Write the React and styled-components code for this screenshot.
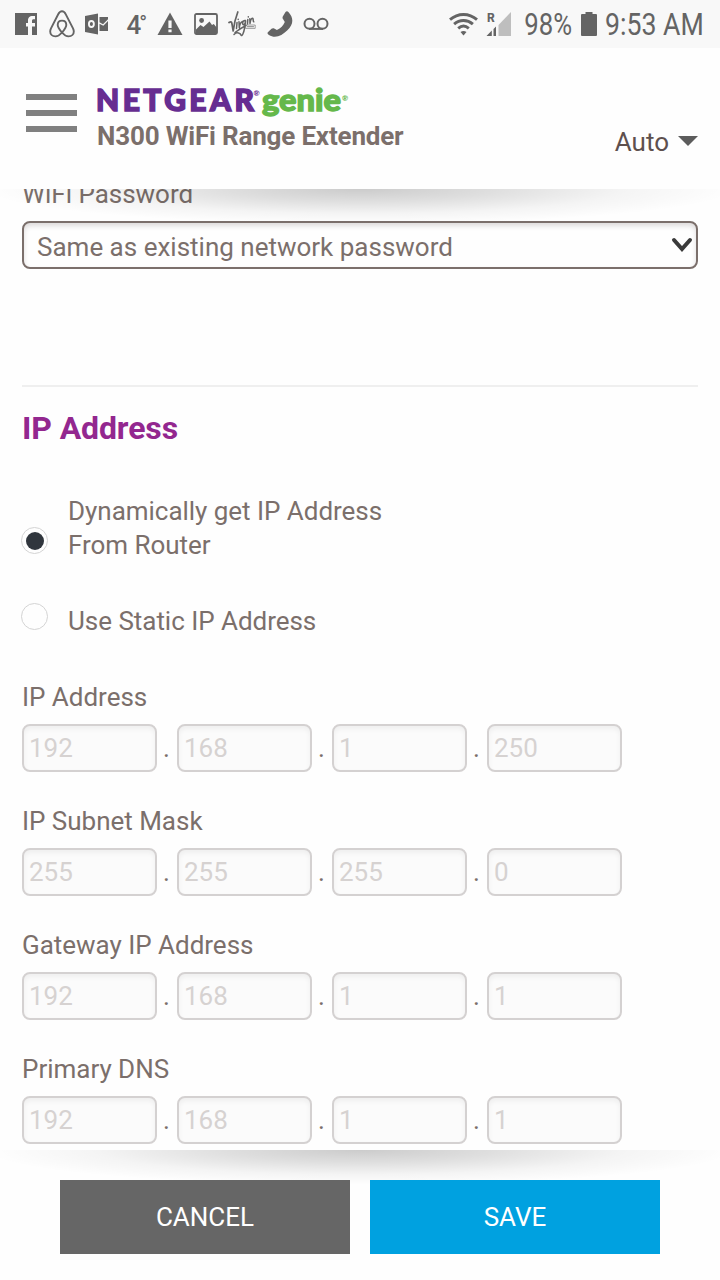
import React from 'react';
import styled, { createGlobalStyle } from 'styled-components';

const GlobalStyle = createGlobalStyle`
  * { box-sizing: border-box; }
  body {
    margin: 0;
    background: #fefefe;
    font-family: Roboto, "Liberation Sans", sans-serif;
    font-size: 26px;
    line-height: 34px;
    color: #7b6f6b;
  }
`;

const edgeShadow = `radial-gradient(
  ellipse 375px 35px at 50% 0,
  rgba(0, 0, 0, 0.2),
  rgba(0, 0, 0, 0.125) 35%,
  rgba(0, 0, 0, 0.04) 70%,
  transparent
)`;

const Screen = styled.div`
  display: flex;
  flex-direction: column;
  width: 720px;
  height: 1280px;
  overflow: hidden;
`;

const StatusBar = styled.div`
  display: flex;
  flex: none;
  justify-content: space-between;
  height: 48px;
  padding: 0 16px 0 14px;
  background: #f8f8f8;
  color: #646464;
  svg { display: block; flex: none; }
`;

const StatusGroup = styled.div`
  display: flex;
  align-items: center;
  gap: ${(p) => p.$gap || 0}px;
`;

const Temperature = styled.span`
  display: flex;
  width: 20px;
  margin: 1px 0 0 7px;
  font-size: 26px;
  font-weight: 500;
  white-space: nowrap;
  sup { font-size: 21px; font-weight: 400; line-height: 30px; margin-left: -2px; }
`;

const StatusText = styled.span`
  width: ${(p) => p.$width}px;
  font-size: 31px;
  white-space: nowrap;
  padding-top: 1px;
  span { display: inline-block; transform: scaleX(${(p) => p.$scale}); transform-origin: 0 50%; }
`;

const Header = styled.header`
  display: flex;
  flex: none;
  height: 141px;
  padding: 0 22px 0 26px;
  background: #fefefe;
`;

const MenuButton = styled.button`
  display: flex;
  flex-direction: column;
  gap: 10px;
  width: 51px;
  margin: 46px 20px 0 0;
  padding: 0;
  border: 0;
  background: none;
  align-self: flex-start;
  i { width: 51px; height: 6px; background: #808080; }
`;

const Brand = styled.div`
  flex: 1;
  padding-top: 36px;
  svg { display: block; overflow: visible; }
`;

const DeviceName = styled.div`
  margin-top: -1px;
  font-weight: 700;
  font-size: 26px;
  letter-spacing: -0.18px;
  white-space: nowrap;
`;

const Language = styled.div`
  display: flex;
  align-items: center;
  gap: 9px;
  height: 34px;
  margin-top: 77px;
  color: #5e504e;
`;

const CaretDown = styled.i`
  border: 10px solid transparent;
  border-top-color: #5c5c5c;
  border-bottom: 0;
  margin-bottom: 2px;
`;

const Content = styled.main`
  position: relative;
  flex: 1;
  overflow: hidden;
  padding: 0 22px;
  &::before {
    content: '';
    position: absolute;
    top: 0;
    left: 0;
    right: 0;
    height: 36px;
    background: ${edgeShadow};
  }
`;

const Label = styled.div`
  height: 34px;
  margin-bottom: 10px;
  letter-spacing: -0.02px;
`;

const PasswordField = styled.div`
  margin-top: -12px;
`;

const SelectBox = styled.div`
  display: flex;
  align-items: center;
  justify-content: space-between;
  height: 48px;
  padding: 4px 3px 0 13px;
  border: 2px solid #7b6f6b;
  border-radius: 8px;
  box-shadow: inset 0 3px 5px rgba(80, 60, 60, 0.18);
  svg { margin-bottom: 4px; }
`;

const Section = styled.section`
  margin-top: 116px;
  border-top: 2px solid #efefef;
`;

const SectionTitle = styled.h2`
  margin: 22px 0 47px;
  font-size: 32px;
  line-height: 38px;
  font-weight: 700;
  letter-spacing: -0.1px;
  color: #93278f;
`;

const RadioRow = styled.label`
  display: flex;
  width: 400px;
  margin-bottom: 42px;
  letter-spacing: -0.03px;
`;

const RadioDot = styled.span`
  display: flex;
  flex: none;
  align-items: center;
  justify-content: center;
  width: 27px;
  height: 27px;
  margin: ${(p) => p.$top}px 20px 0 -1px;
  border: 1px solid #d4d4d4;
  border-radius: 50%;
  &::after {
    content: '';
    width: 18px;
    height: 18px;
    border-radius: 50%;
    background: ${(p) => (p.$checked ? '#30363d' : 'transparent')};
  }
`;

const FieldGroup = styled.div`
  margin-bottom: 32px;
`;

const OctetRow = styled.div`
  display: flex;
`;

const Octet = styled.div`
  width: 135px;
  height: 48px;
  padding: 5px 5px;
  border: 2px solid #d4d1d1;
  border-radius: 8px;
  background: #fbfbfb;
  box-shadow: inset 0 3px 5px rgba(0, 0, 0, 0.05);
  color: #d6d2d1;
`;

const Separator = styled.span`
  width: 20px;
  padding: 7px 1px 0 0;
  text-align: center;
`;

const Footer = styled.footer`
  display: flex;
  flex: none;
  gap: 20px;
  height: 130px;
  padding: 30px 60px 26px;
  background: ${edgeShadow} #fefefe;
`;

const Action = styled.button`
  flex: 1;
  border: 0;
  padding: 0;
  background: ${(p) => p.$color};
  color: #fff;
  font: 400 26px/34px Roboto, "Liberation Sans", sans-serif;
`;

const FacebookIcon = () => (
  <svg width="24" height="24" viewBox="0 0 24 24">
    <path fill="#646464" d="M1 1h22v22h-5v-8.500h3v-3.500h-3V9c0-1.200.4-1.800 1.800-1.800H21V4h-2.300C15.300 4 14 5.800 14 8.600V11h-2v3.500h2V23H1z" />
  </svg>
);

const AirbnbIcon = () => (
  <svg width="26" height="28" viewBox="0 0 26 28" fill="none" stroke="#646464" strokeWidth="1.900" strokeLinejoin="round">
    <path d="M13 22.500C10.300 19.300 8.700 16.900 8.700 14.900c0-2.600 1.700-4.300 4.300-4.300s4.300 1.700 4.300 4.300c0 2-1.600 4.400-4.300 7.600zm0 0c-2.300 2.700-4.400 3.900-6.600 3.900-3.200 0-5.200-2.200-5.200-5 0-1 .3-1.900.8-3L9.200 4.300C10.300 2.100 11.300 1.300 13 1.300s2.700.8 3.800 3L24 18.400c.5 1.100.8 2 .8 3 0 2.800-2 5-5.200 5-2.200 0-4.300-1.200-6.600-3.900z" />
  </svg>
);

const OutlookIcon = () => (
  <svg width="24" height="22" viewBox="0 0 24 22">
    <path fill="#646464" fillRule="evenodd" d="M0 3 13 .5v21L0 19zM6.400 7C4.200 7 3 8.600 3 11s1.200 4 3.400 4 3.400-1.600 3.400-4-1.200-4-3.400-4zm0 2c1 0 1.500.8 1.500 2s-.5 2-1.500 2-1.500-.8-1.500-2 .5-2 1.500-2z" />
    <path fill="#646464" d="M14.500 4H23v2.200l-5 5-3.500-2zM14.500 10.700l3.800 2L23 8v10h-8.500z" />
  </svg>
);

const WarningIcon = () => (
  <svg width="26" height="24" viewBox="0 0 26 24">
    <path fill="#646464" d="M13 .5 25.500 23H.5z" />
    <path fill="#f8f8f8" d="M11.400 8.500h3.200V16h-3.200zM11.400 17.500h3.200v2.700h-3.200z" />
  </svg>
);

const PictureIcon = () => (
  <svg width="24" height="22" viewBox="0 0 24 22">
    <rect x="1" y="1" width="22" height="20" rx="1.500" fill="none" stroke="#646464" strokeWidth="1.800" />
    <circle cx="7.600" cy="7.500" r="2.400" fill="#646464" />
    <path fill="#646464" d="M2 16.500 6.500 12l3 2 6-5.500L18 12l1.800-1 3.200 4v6H2z" />
  </svg>
);

const VirginIcon = () => (
  <svg width="28" height="26" viewBox="0 0 28 26" fill="none" stroke="#646464" strokeLinecap="round" strokeLinejoin="round">
    <path strokeWidth="1.700" d="M1 11.500c1.500-1 2.500-1 2.800.5l1.400 8C6 13 7.500 7 9.800 1" />
    <path strokeWidth="1.500" d="M9 11.500 8.500 17.500M10.200 8.200v.2M11 10.800l.3 6c.3-3 1.200-5.500 3.200-6.300M17.500 9.500c-2-.3-3 1.300-2.800 3.200.2 2 2.400 1.200 2.900-2.700L16.500 17.500C15.500 23 14 25 13.300 24.500 12.500 22 9 20.500 6 23.500M7 21.500C11 18.500 14 16.500 18 14.500M19.800 8.500l-.3 4.500M20.300 5.800v.2M21.800 7.800l.2 4.600c.4-3 1.200-5 2.400-5.200 1.300-.1.300 3 1.400 3.600" />
    <rect x="18" y="14" width="9.200" height="3.400" strokeWidth=".6" />
    <path d="M19.500 15.700h6" strokeWidth=".8" />
  </svg>
);

const PhoneIcon = () => (
  <svg width="26" height="26" viewBox="0 0 26 26">
    <path fill="#646464" d="M18.500.9c1-.9 2.100-.8 2.900.1 5.700 6.300 5 12.500-1 18.200-5.500 5.500-12.200 8.600-18.500 4.700C.3 22.900.1 22 1.100 21l3.400-3.200c.9-.8 1.800-.8 2.700-.3l2.700 1.500c3.900-1.800 6.400-4.400 7.900-8.100L16 8.100c-.7-1-.6-1.900.1-3z" />
  </svg>
);

const VoicemailIcon = () => (
  <svg width="26" height="14" viewBox="0 0 26 14" fill="none" stroke="#646464" strokeWidth="2">
    <circle cx="6.500" cy="6.700" r="5" />
    <circle cx="19.500" cy="6.700" r="5" />
    <path d="M6 11.900h14" />
  </svg>
);

const WifiIcon = () => (
  <svg width="29" height="24" viewBox="0 0 29 24" fill="none" stroke="#646464" strokeWidth="2.900">
    <path d="M1 7.700c8-7 19-7 27 0M5.100 12.100c5.600-4.900 13.200-4.900 18.800 0M9.200 16.400c3.300-2.900 7.300-2.900 10.600 0" />
    <path d="M14.500 23.500 11.500 20q3-2 6 0z" fill="#646464" stroke="none" />
  </svg>
);

const SignalIcon = () => (
  <svg width="25" height="24" viewBox="0 0 25 24">
    <text x="1" y="10" fontFamily="Roboto, sans-serif" fontSize="12" fontWeight="800" fill="#646464">R</text>
    <path fill="#bebebe" d="M25 0v24H12.500V13z" />
    <path fill="#646464" d="M.5 24 5.800 18.500V24zM7.500 17 10 14.500V24H7.500z" />
  </svg>
);

const BatteryIcon = () => (
  <svg width="16" height="24" viewBox="0 0 16 24">
    <path fill="#646464" d="M4.500 0h7v2H15q1 0 1 1v20q0 1-1 1H1q-1 0-1-1V3q0-1 1-1h3.500z" />
  </svg>
);

const GenieLogo = () => (
  <svg width="252" height="36" viewBox="0 0 252 36">
    <text x="-1" y="26.600" textLength="158" lengthAdjust="spacing" fontFamily="Lato, sans-serif" fontSize="30" fontWeight="900" fill="#662d91" stroke="#662d91" strokeWidth="1.500">NETGEAR</text>
    <text x="156.500" y="12" fontFamily="Lato, sans-serif" fontSize="7.500" fontWeight="900" fill="#662d91">®</text>
    <text x="165" y="26.600" textLength="79" lengthAdjust="spacingAndGlyphs" fontFamily="Lato, sans-serif" fontSize="29.500" fontWeight="900" fill="#65b84b" stroke="#65b84b" strokeWidth="1.300">genie</text>
    <text x="245" y="17" fontFamily="Lato, sans-serif" fontSize="7.500" fontWeight="900" fill="#65b84b">®</text>
  </svg>
);

const SelectArrow = () => (
  <svg width="22" height="16" viewBox="0 0 22 16" fill="none" stroke="#3a3a3a" strokeWidth="4" strokeLinecap="round">
    <path d="M3 3 11 12 19 3" />
  </svg>
);

const addressFields = [
  { label: 'IP Address', octets: ['192', '168', '1', '250'] },
  { label: 'IP Subnet Mask', octets: ['255', '255', '255', '0'] },
  { label: 'Gateway IP Address', octets: ['192', '168', '1', '1'] },
  { label: 'Primary DNS', octets: ['192', '168', '1', '1'] },
];

export default function App() {
  return (
    <Screen>
      <GlobalStyle />
      <StatusBar>
        <StatusGroup $gap={10.5}>
          <FacebookIcon />
          <AirbnbIcon />
          <OutlookIcon />
          <Temperature>4<sup>°</sup></Temperature>
          <WarningIcon />
          <PictureIcon />
          <VirginIcon />
          <PhoneIcon />
          <VoicemailIcon />
        </StatusGroup>
        <StatusGroup $gap={8}>
          <WifiIcon />
          <SignalIcon />
          <StatusText $width={54} $scale={0.83}><span>&#8202;&#8202;98%</span></StatusText>
          <BatteryIcon />
          <StatusText $width={99} $scale={0.86}><span>9:53 AM</span></StatusText>
        </StatusGroup>
      </StatusBar>
      <Header>
        <MenuButton aria-label="Menu"><i /><i /><i /></MenuButton>
        <Brand>
          <GenieLogo />
          <DeviceName>N300 WiFi Range Extender</DeviceName>
        </Brand>
        <Language>Auto<CaretDown /></Language>
      </Header>
      <Content>
        <PasswordField>
          <Label>WiFi Password</Label>
          <SelectBox>Same as existing network password<SelectArrow /></SelectBox>
        </PasswordField>
        <Section>
          <SectionTitle>IP Address</SectionTitle>
          <RadioRow>
            <RadioDot $top={33} $checked />
            <span>Dynamically get IP Address<br />From Router</span>
          </RadioRow>
          <RadioRow>
            <RadioDot $top={-1} />
            <span>Use Static IP Address</span>
          </RadioRow>
          {addressFields.map((field) => (
            <FieldGroup key={field.label}>
              <Label>{field.label}</Label>
              <OctetRow>
                {field.octets.map((value, i) => (
                  <React.Fragment key={i}>
                    {i > 0 && <Separator>.</Separator>}
                    <Octet>{value}</Octet>
                  </React.Fragment>
                ))}
              </OctetRow>
            </FieldGroup>
          ))}
        </Section>
      </Content>
      <Footer>
        <Action $color="#666666">CANCEL</Action>
        <Action $color="#00a1e0">SAVE</Action>
      </Footer>
    </Screen>
  );
}
